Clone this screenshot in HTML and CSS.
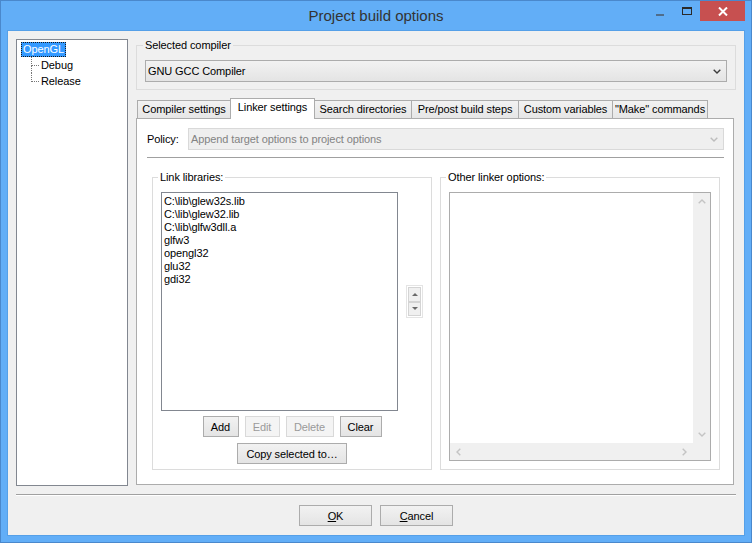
FILE: index.html
```html
<!DOCTYPE html>
<html>
<head>
<meta charset="utf-8">
<title>Project build options</title>
<link rel="stylesheet" href="styles.css">
</head>
<body>
<div class="window">
  <div class="titlebar">
    <div></div>
    <div class="title">Project build options</div>
    <div class="caption">
      <div class="cap-btn"><span class="min-icon"></span></div>
      <div class="cap-btn"><span class="max-icon"></span></div>
      <div class="cap-close">
        <svg width="10" height="9" viewBox="0 0 10 9"><path d="M1 0.5 L9 8.5 M9 0.5 L1 8.5" stroke="#fff" stroke-width="2" fill="none"/></svg>
      </div>
    </div>
  </div>
  <div class="client">
    <div class="main">
      <div class="tree">
        <div class="tree-row root"><span class="sel">OpenGL</span></div>
        <div class="tree-row child">
          <div class="conn"><div class="conn-top"></div><div class="conn-bot mid"></div></div>
          <span class="node">Debug</span>
        </div>
        <div class="tree-row child">
          <div class="conn"><div class="conn-top"></div><div class="conn-bot"></div></div>
          <span class="node">Release</span>
        </div>
      </div>
      <div class="right">
        <fieldset class="group compiler-group">
          <legend>Selected compiler</legend>
          <div class="combo">
            <span>GNU GCC Compiler</span>
            <svg width="8" height="5" viewBox="0 0 8 5"><polyline points="0.7,0.7 4,4 7.3,0.7" fill="none" stroke="#3c3c3c" stroke-width="1.4"/></svg>
          </div>
        </fieldset>
        <div class="tabs">
          <div class="tab w1">Compiler settings</div>
          <div class="tab active w2">Linker settings</div>
          <div class="tab w3">Search directories</div>
          <div class="tab w4">Pre/post build steps</div>
          <div class="tab w5">Custom variables</div>
          <div class="tab w6">"Make" commands</div>
        </div>
        <div class="panel">
          <div class="policy-row">
            <span class="policy-label">Policy:</span>
            <div class="combo disabled">
              <span>Append target options to project options</span>
              <svg width="8" height="5" viewBox="0 0 8 5"><polyline points="0.7,0.7 4,4 7.3,0.7" fill="none" stroke="#bdbdbd" stroke-width="1.4"/></svg>
            </div>
          </div>
          <div class="hsep"></div>
          <div class="groups">
            <fieldset class="group inner link-group">
              <legend>Link libraries:</legend>
              <div class="list-row">
                <div class="listbox">
                  <div>C:\lib\glew32s.lib</div>
                  <div>C:\lib\glew32.lib</div>
                  <div>C:\lib\glfw3dll.a</div>
                  <div>glfw3</div>
                  <div>opengl32</div>
                  <div>glu32</div>
                  <div>gdi32</div>
                </div>
                <div class="spin">
                  <div class="spin-btn"><span class="tri-up"></span></div>
                  <div class="spin-btn"><span class="tri-down"></span></div>
                </div>
              </div>
              <div class="btn-row">
                <div class="btn b-add">Add</div>
                <div class="btn disabled b-edit">Edit</div>
                <div class="btn disabled b-del">Delete</div>
                <div class="btn b-clear">Clear</div>
              </div>
              <div class="btn-row copy-row">
                <div class="btn b-copy">Copy selected to…</div>
              </div>
            </fieldset>
            <fieldset class="group inner other-group">
              <legend>Other linker options:</legend>
              <div class="textarea">
                <div class="text-area"></div>
                <div class="vscroll">
                  <div class="arrow"><svg width="8" height="5" viewBox="0 0 8 5"><polyline points="0.7,4.3 4,1 7.3,4.3" fill="none" stroke="#c4c4c4" stroke-width="1.4"/></svg></div>
                  <div class="arrow"><svg width="8" height="5" viewBox="0 0 8 5"><polyline points="0.7,0.7 4,4 7.3,0.7" fill="none" stroke="#c4c4c4" stroke-width="1.4"/></svg></div>
                </div>
                <div class="hscroll">
                  <div class="arrow"><svg width="5" height="8" viewBox="0 0 5 8"><polyline points="4.3,0.7 1,4 4.3,7.3" fill="none" stroke="#c4c4c4" stroke-width="1.4"/></svg></div>
                  <div class="arrow"><svg width="5" height="8" viewBox="0 0 5 8"><polyline points="0.7,0.7 4,4 0.7,7.3" fill="none" stroke="#c4c4c4" stroke-width="1.4"/></svg></div>
                </div>
                <div class="corner"></div>
              </div>
            </fieldset>
          </div>
        </div>
      </div>
    </div>
    <div class="footer-sep"></div>
    <div class="footer">
      <div class="btn dlg"><span><u>O</u>K</span></div>
      <div class="btn dlg"><span><u>C</u>ancel</span></div>
    </div>
  </div>
</div>
</body>
</html>
```
FILE: styles.css
```css
* { box-sizing: border-box; }
html, body { margin: 0; padding: 0; }
body {
  width: 752px;
  height: 543px;
  overflow: hidden;
  font-family: "Liberation Sans", Arial, sans-serif;
  font-size: 11px;
  letter-spacing: -0.1px;
  color: #000;
  background: #62aef7;
}
.window {
  width: 752px;
  height: 543px;
  background: #62aef7;
  border: 1px solid #4a88cc;
  padding: 0 6px 6px;
  display: flex;
  flex-direction: column;
}
.titlebar {
  height: 29px;
  margin: 0 -6px;
  display: grid;
  grid-template-columns: 1fr auto 1fr;
}
.title {
  font-size: 15px;
  letter-spacing: 0;
  line-height: 29px;
  color: #333;
}
.caption {
  display: flex;
  justify-content: flex-end;
  align-items: flex-start;
  padding-right: 6px;
}
.cap-btn {
  width: 26px;
  height: 20px;
  display: flex;
  align-items: center;
  justify-content: center;
}
.min-icon {
  width: 8px;
  height: 2px;
  background: #4f6d8c;
  margin-top: 8px;
  margin-left: -2px;
}
.max-icon {
  width: 10px;
  height: 8px;
  border: 1px solid #2a2a2a;
  border-top-width: 2px;
}
.cap-close {
  width: 45px;
  height: 20px;
  background: #c75050;
  display: flex;
  align-items: center;
  justify-content: center;
}
.client {
  flex: 1;
  border: 1px solid #55a0e8;
  background: #f0f0f0;
  display: flex;
  flex-direction: column;
}
.main {
  display: flex;
  gap: 8px;
  padding: 8px 8px 0;
  height: 455px;
}
.tree {
  width: 112px;
  height: 447px;
  border: 1px solid #828790;
  background: #fff;
  padding: 2px 0 0 4px;
}
.tree-row {
  display: flex;
  align-items: center;
  height: 16px;
}
.tree-row.root { height: 15px; }
.sel {
  display: block;
  height: 15px;
  line-height: 13px;
  padding: 0 1px;
  background: #3399ff;
  color: #fff;
  border: 1px dotted #1a1a1a;
}
.tree-row.child { margin-left: 10px; align-items: stretch; }
.conn {
  width: 8px;
  display: flex;
  flex-direction: column;
}
.conn-top {
  height: 9px;
  border-left: 1px dotted #777;
  border-bottom: 1px dotted #777;
}
.conn-bot { height: 7px; }
.conn-bot.mid { border-left: 1px dotted #777; }
.node {
  padding-left: 2px;
  line-height: 16px;
}
.right {
  width: 600px;
  display: flex;
  flex-direction: column;
}
.group {
  margin: 0;
  min-width: 0;
  border: 1px solid #dcdcdc;
  padding: 8px 8px 7px;
}
.group legend {
  padding: 0 2px;
  margin-left: -2px;
  line-height: 13px;
  font-size: 11px;
}
.group.inner legend { margin-left: -3px; }
.combo {
  height: 22px;
  border: 1px solid #acacac;
  background: linear-gradient(#f2f2f2, #e4e4e4);
  display: flex;
  align-items: center;
  justify-content: space-between;
  padding: 0 5px 0 2px;
}
.combo.disabled {
  flex: 1;
  background: #efefef;
  border-color: #d9d9d9;
  color: #838383;
}
.tabs {
  margin-top: 8px;
  height: 20px;
  display: flex;
  align-items: flex-end;
  padding-left: 1px;
  position: relative;
  z-index: 1;
}
.tab {
  height: 18px;
  line-height: 16px;
  border: 1px solid #acacac;
  border-bottom: none;
  background: linear-gradient(#f2f2f2, #e6e6e6);
  text-align: center;
  margin-left: -1px;
  white-space: nowrap;
}
.tab:first-child { margin-left: 0; }
.tab.active {
  height: 21px;
  line-height: 17px;
  background: #fff;
  margin-bottom: -1px;
  position: relative;
  z-index: 2;
}
.w1 { width: 94px; }
.w2 { width: 85px; }
.w3 { width: 98px; }
.w4 { width: 108px; }
.w5 { width: 95px; }
.w6 { width: 96px; }
.panel {
  width: 598px;
  height: 367px;
  border: 1px solid #acacac;
  background: #fff;
  padding: 9px 9px 0 10px;
}
.policy-row {
  display: flex;
  align-items: center;
  height: 22px;
}
.policy-label { width: 41px; }
.hsep {
  margin-top: 7px;
  height: 1px;
  background: #a0a0a0;
}
.groups {
  margin-top: 13px;
  display: flex;
  gap: 8px;
  padding: 0 4px 0 5px;
}
.groups .group {
  width: 280px;
  height: 299px;
}
.link-group { padding: 8px 8px 5px; }
.other-group { padding: 8px; }
.list-row {
  display: flex;
  align-items: center;
  gap: 8px;
}
.listbox {
  width: 237px;
  height: 219px;
  border: 1px solid #828790;
  background: #fff;
  padding: 2px 0 0 2px;
  line-height: 13px;
}
.spin {
  width: 17px;
  height: 33px;
  border: 1px solid #e4e4e4;
  padding: 1px;
  display: flex;
  flex-direction: column;
}
.spin-btn {
  flex: 1;
  border: 1px solid #d4d4d4;
  background: #f0f0f0;
  display: flex;
  align-items: center;
  justify-content: center;
}
.tri-up {
  width: 0; height: 0;
  border-left: 3px solid transparent;
  border-right: 3px solid transparent;
  border-bottom: 3px solid #6a6a6a;
}
.tri-down {
  width: 0; height: 0;
  border-left: 3px solid transparent;
  border-right: 3px solid transparent;
  border-top: 3px solid #6a6a6a;
}
.btn-row {
  display: flex;
  justify-content: center;
  gap: 6px;
  margin-top: 5px;
}
.copy-row { margin-top: 6px; }
.btn {
  height: 21px;
  border: 1px solid #acacac;
  background: linear-gradient(#f2f2f2, #e4e4e4);
  display: flex;
  align-items: center;
  justify-content: center;
  white-space: nowrap;
}
.btn.disabled {
  background: #f4f4f4;
  border-color: #d9d9d9;
  color: #9a9a9a;
}
.b-add { width: 36px; }
.b-edit { width: 35px; }
.b-del { width: 48px; }
.b-clear { width: 42px; }
.b-copy { width: 110px; }
.textarea {
  width: 262px;
  height: 269px;
  border: 1px solid #acacac;
  background: #fff;
  display: grid;
  grid-template-columns: 243px 17px;
  grid-template-rows: 250px 17px;
}
.vscroll {
  background: #f0f0f0;
  display: flex;
  flex-direction: column;
  justify-content: space-between;
}
.hscroll {
  background: #f0f0f0;
  display: flex;
  justify-content: space-between;
}
.corner { background: #f0f0f0; }
.arrow {
  width: 17px;
  height: 17px;
  display: flex;
  align-items: center;
  justify-content: center;
}
.footer-sep {
  margin: 8px 8px 0;
  height: 2px;
  border-top: 1px solid #a0a0a0;
  border-bottom: 1px solid #fff;
}
.footer {
  display: flex;
  justify-content: center;
  gap: 8px;
  padding-top: 9px;
}
.btn.dlg { width: 73px; }
```
